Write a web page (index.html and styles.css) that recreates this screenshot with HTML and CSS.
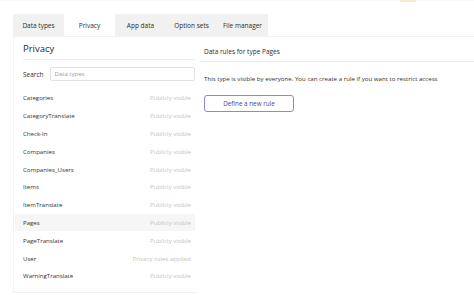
FILE: index.html
```html
<!DOCTYPE html>
<html>

<link rel="stylesheet" href="styles.css">

<head>
    <meta charset="utf-8">
    <title>Data</title>
</head>

<body>
    <div class="topbar">
        <span class="marker"></span>
    </div>
    <main>
        <nav class="tabs">
            <div class="tab">Data types</div>
            <div class="tab active">Privacy</div>
            <div class="tab">App data</div>
            <div class="tab">Option sets</div>
            <div class="tab">File manager</div>
        </nav>
        <div class="content">
            <section class="types">
                <h1>Privacy</h1>
                <div class="search">
                    <label for="q">Search</label>
                    <input id="q" type="text" placeholder="Data types">
                </div>
                <ul class="typeList">
                    <li><span>Categories</span><span class="state">Publicly visible</span></li>
                    <li><span>CategoryTranslate</span><span class="state">Publicly visible</span></li>
                    <li><span>Check-In</span><span class="state">Publicly visible</span></li>
                    <li><span>Companies</span><span class="state">Publicly visible</span></li>
                    <li><span>Companies_Users</span><span class="state">Publicly visible</span></li>
                    <li><span>Items</span><span class="state">Publicly visible</span></li>
                    <li><span>ItemTranslate</span><span class="state">Publicly visible</span></li>
                    <li class="selected"><span>Pages</span><span class="state">Publicly visible</span></li>
                    <li><span>PageTranslate</span><span class="state">Publicly visible</span></li>
                    <li><span>User</span><span class="state">Privacy rules applied</span></li>
                    <li><span>WarningTranslate</span><span class="state">Publicly visible</span></li>
                </ul>
            </section>
            <section class="rules">
                <h2>Data rules for type Pages</h2>
                <p>This type is visible by everyone. You can create a rule if you want to restrict access</p>
                <button>Define a new rule</button>
            </section>
        </div>
    </main>
</body>

</html>
```

FILE: styles.css
```css
* {
    box-sizing: border-box;
    padding: 0;
    margin: 0;
}

body {
    background-color: #ffffff;
    font-family: "Open Sans", "Noto Sans", sans-serif;
    color: #333333;
    font-size: 6px;
    width: 474px;
    height: 295px;
    overflow: hidden;
}

.topbar {
    height: 14px;
    position: relative;
    border-top: 1px solid #fafafa;

    & .marker {
        position: absolute;
        left: 400px;
        top: -1px;
        width: 16px;
        height: 2px;
        background-color: #f6ecc4;
    }
}

main {
    padding-left: 13px;
}

.tabs {
    display: flex;
    height: 23px;
    border-bottom: 1px solid #f2f2f2;

    & .tab {
        width: 51px;
        display: flex;
        align-items: center;
        justify-content: center;
        background-color: #f1f1f1;
        font-size: 6.5px;
        color: #2e2e2e;
    }

    & .tab.active {
        background-color: #ffffff;
    }
}

.content {
    display: flex;
    gap: 3px;
}

.types {
    width: 184px;
    height: 256px;
    border-left: 1px solid #f3f3f3;
    border-bottom: 1px solid #f0f0f0;
    padding: 0 2px 0 1px;

    & h1 {
        font-size: 9.5px;
        font-weight: 400;
        color: #2e2e2e;
        padding: 5px 0 4px 0;
        border-bottom: 1px solid #eeeeee;
        margin-left: 8px;
    }

    & .search {
        display: flex;
        align-items: center;
        gap: 6px;
        padding: 7px 0 0 8px;

        & label {
            font-size: 6.5px;
            color: #2e2e2e;
        }

        & input {
            width: 146px;
            height: 14px;
            border: 1px solid #e2e2e2;
            border-radius: 2px;
            font-family: inherit;
            font-size: 6px;
            padding-left: 4px;
        }

        & input::placeholder {
            color: #9a9a9a;
        }
    }

    & .typeList {
        list-style: none;
        margin-top: 8px;

        & li {
            height: 17.8px;
            display: flex;
            align-items: center;
            justify-content: space-between;
            padding: 0 4px 0 8px;
            font-size: 6.1px;
        }

        & li.selected {
            background-color: #f6f6f6;
        }

        & .state {
            color: #c4c4c4;
        }
    }
}

.rules {
    flex: 1;

    & h2 {
        font-size: 6.5px;
        font-weight: 400;
        color: #2e2e2e;
        padding: 10px 0 5px 4px;
        border-bottom: 1px solid #eeeeee;
    }

    & p {
        font-size: 6.15px;
        color: #2e2e2e;
        padding: 12px 0 0 4px;
    }

    & button {
        margin: 12px 0 0 4px;
        width: 90px;
        height: 17px;
        border: 1px solid #8f86d8;
        border-radius: 3px;
        background-color: #ffffff;
        font-family: inherit;
        font-size: 6.3px;
        color: #4b42a3;
    }
}
```
